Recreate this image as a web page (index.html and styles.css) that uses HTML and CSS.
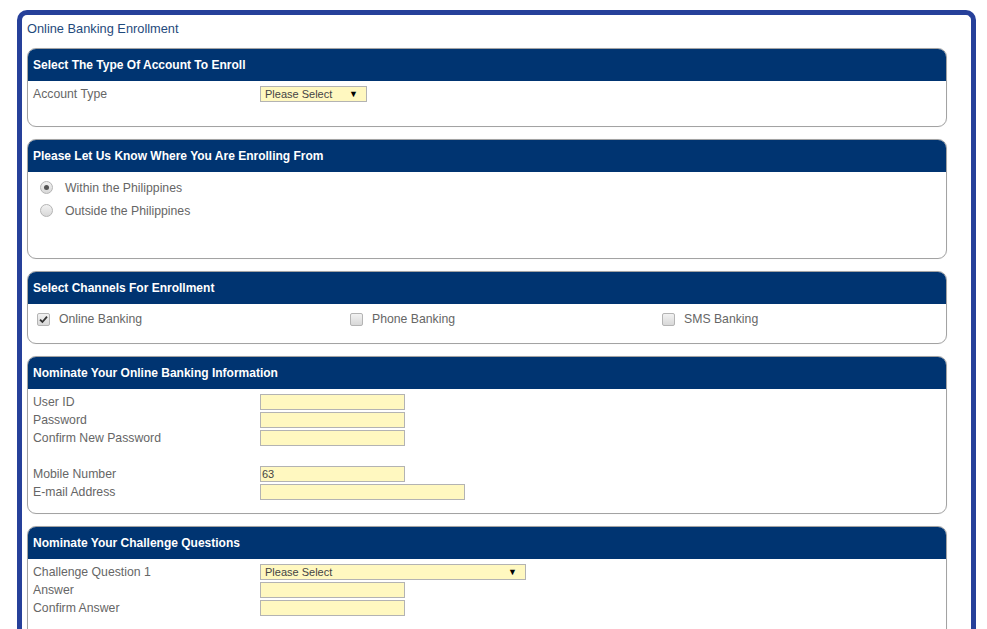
FILE: index.html
```html
<!DOCTYPE html>
<html>
<head>
<meta charset="utf-8">
<title>Online Banking Enrollment</title>
<link rel="stylesheet" href="styles.css">
</head>
<body>
<div class="frame">
  <div class="page-title">Online Banking Enrollment</div>

  <div class="panel">
    <div class="panel-head">Select The Type Of Account To Enroll</div>
    <div class="panel-body p1">
      <div class="row">
        <div class="label">Account Type</div>
        <div class="select w107"><span>Please Select</span><span class="arrow">▼</span></div>
      </div>
    </div>
  </div>

  <div class="panel">
    <div class="panel-head">Please Let Us Know Where You Are Enrolling From</div>
    <div class="panel-body p2">
      <div class="radio-row"><span class="radio checked"></span><span class="opt">Within the Philippines</span></div>
      <div class="radio-row"><span class="radio"></span><span class="opt">Outside the Philippines</span></div>
    </div>
  </div>

  <div class="panel">
    <div class="panel-head">Select Channels For Enrollment</div>
    <div class="panel-body p3">
      <div class="channels">
        <div class="check-item"><span class="check checked"><svg width="9" height="9" viewBox="0 0 9 9"><path d="M1 4.6 L3.4 7 L8 1.6" fill="none" stroke="#333" stroke-width="1.8"/></svg></span><span class="opt">Online Banking</span></div>
        <div class="check-item"><span class="check"></span><span class="opt">Phone Banking</span></div>
        <div class="check-item"><span class="check"></span><span class="opt">SMS Banking</span></div>
      </div>
    </div>
  </div>

  <div class="panel">
    <div class="panel-head">Nominate Your Online Banking Information</div>
    <div class="panel-body p4">
      <div class="row"><div class="label">User ID</div><div class="input w145"></div></div>
      <div class="row"><div class="label">Password</div><div class="input w145"></div></div>
      <div class="row"><div class="label">Confirm New Password</div><div class="input w145"></div></div>
      <div class="row"></div>
      <div class="row"><div class="label">Mobile Number</div><div class="input w145">63</div></div>
      <div class="row"><div class="label">E-mail Address</div><div class="input w205"></div></div>
    </div>
  </div>

  <div class="panel">
    <div class="panel-head">Nominate Your Challenge Questions</div>
    <div class="panel-body p5">
      <div class="row">
        <div class="label">Challenge Question 1</div>
        <div class="select w266"><span>Please Select</span><span class="arrow">▼</span></div>
      </div>
      <div class="row"><div class="label">Answer</div><div class="input w145"></div></div>
      <div class="row"><div class="label">Confirm Answer</div><div class="input w145"></div></div>
    </div>
  </div>
</div>
</body>
</html>
```
FILE: styles.css
```css
html, body {
  margin: 0;
  padding: 0;
  background: #ffffff;
}

body {
  font-family: "Liberation Sans", Arial, sans-serif;
  font-size: 12.25px;
  color: #666666;
  padding: 10px 0 0 17px;
}

.frame {
  width: 944px;
  border: 5px solid #26409a;
  border-bottom: none;
  border-radius: 10px 10px 0 0;
  padding: 6px 0 20px 5px;
  min-height: 620px;
}

.page-title {
  height: 16px;
  line-height: 16px;
  font-size: 12.8px;
  color: #1f4a7c;
  margin-bottom: 11px;
}

.panel {
  width: 918px;
  border: 1px solid #a3a3a3;
  border-radius: 9px;
  overflow: hidden;
  margin-bottom: 12px;
  box-shadow: 0 0 1px rgba(0,0,0,0.15);
}

.panel-head {
  background: #003471;
  color: #ffffff;
  font-weight: bold;
  font-size: 12px;
  height: 32px;
  line-height: 32px;
  padding-left: 5px;
}

.panel-body {
  padding: 4px 5px 0 5px;
}

.p1 { padding-top: 5px; height: 40px; }
.p2 { height: 82px; }
.p3 { padding-top: 6px; height: 33px; }
.p4 { height: 120px; }
.p5 { height: 120px; }

.row {
  display: flex;
  align-items: center;
  height: 18px;
}

.p1 .row { height: 16px; }

.label {
  width: 227px;
  flex: none;
  line-height: 16px;
}

.input, .select {
  box-sizing: border-box;
  height: 16px;
  background: #fff8c0;
  border: 1px solid #b3b3b3;
  font-size: 11px;
  line-height: 14px;
  color: #444444;
  padding-left: 1px;
}

.select {
  display: flex;
  justify-content: space-between;
  align-items: center;
  padding: 0 8px 0 4px;
  color: #444444;
}

.select .arrow {
  font-size: 9px;
  color: #000000;
}

.w107 { width: 107px; }
.w145 { width: 145px; }
.w205 { width: 205px; }
.w266 { width: 266px; }

.radio-row {
  display: flex;
  align-items: center;
  height: 23px;
}

.radio {
  box-sizing: border-box;
  width: 13px;
  height: 13px;
  margin-left: 7px;
  margin-right: 12px;
  border-radius: 50%;
  border: 1px solid #b4b4b4;
  background: linear-gradient(#f2f2f2, #d8d8d8);
  display: flex;
  align-items: center;
  justify-content: center;
}

.radio.checked::after {
  content: "";
  width: 5px;
  height: 5px;
  border-radius: 50%;
  background: #555555;
}

.channels {
  display: grid;
  grid-template-columns: 312px 312px 294px;
}

.check-item {
  display: flex;
  align-items: center;
  height: 18px;
}

.check {
  box-sizing: border-box;
  width: 13px;
  height: 13px;
  margin-left: 4px;
  margin-right: 9px;
  border: 1px solid #b4b4b4;
  border-radius: 2px;
  background: linear-gradient(#f2f2f2, #d8d8d8);
  display: flex;
  align-items: center;
  justify-content: center;
}

.check-item + .check-item .check { margin-left: 5px; }

.opt {
  line-height: 16px;
}
```
